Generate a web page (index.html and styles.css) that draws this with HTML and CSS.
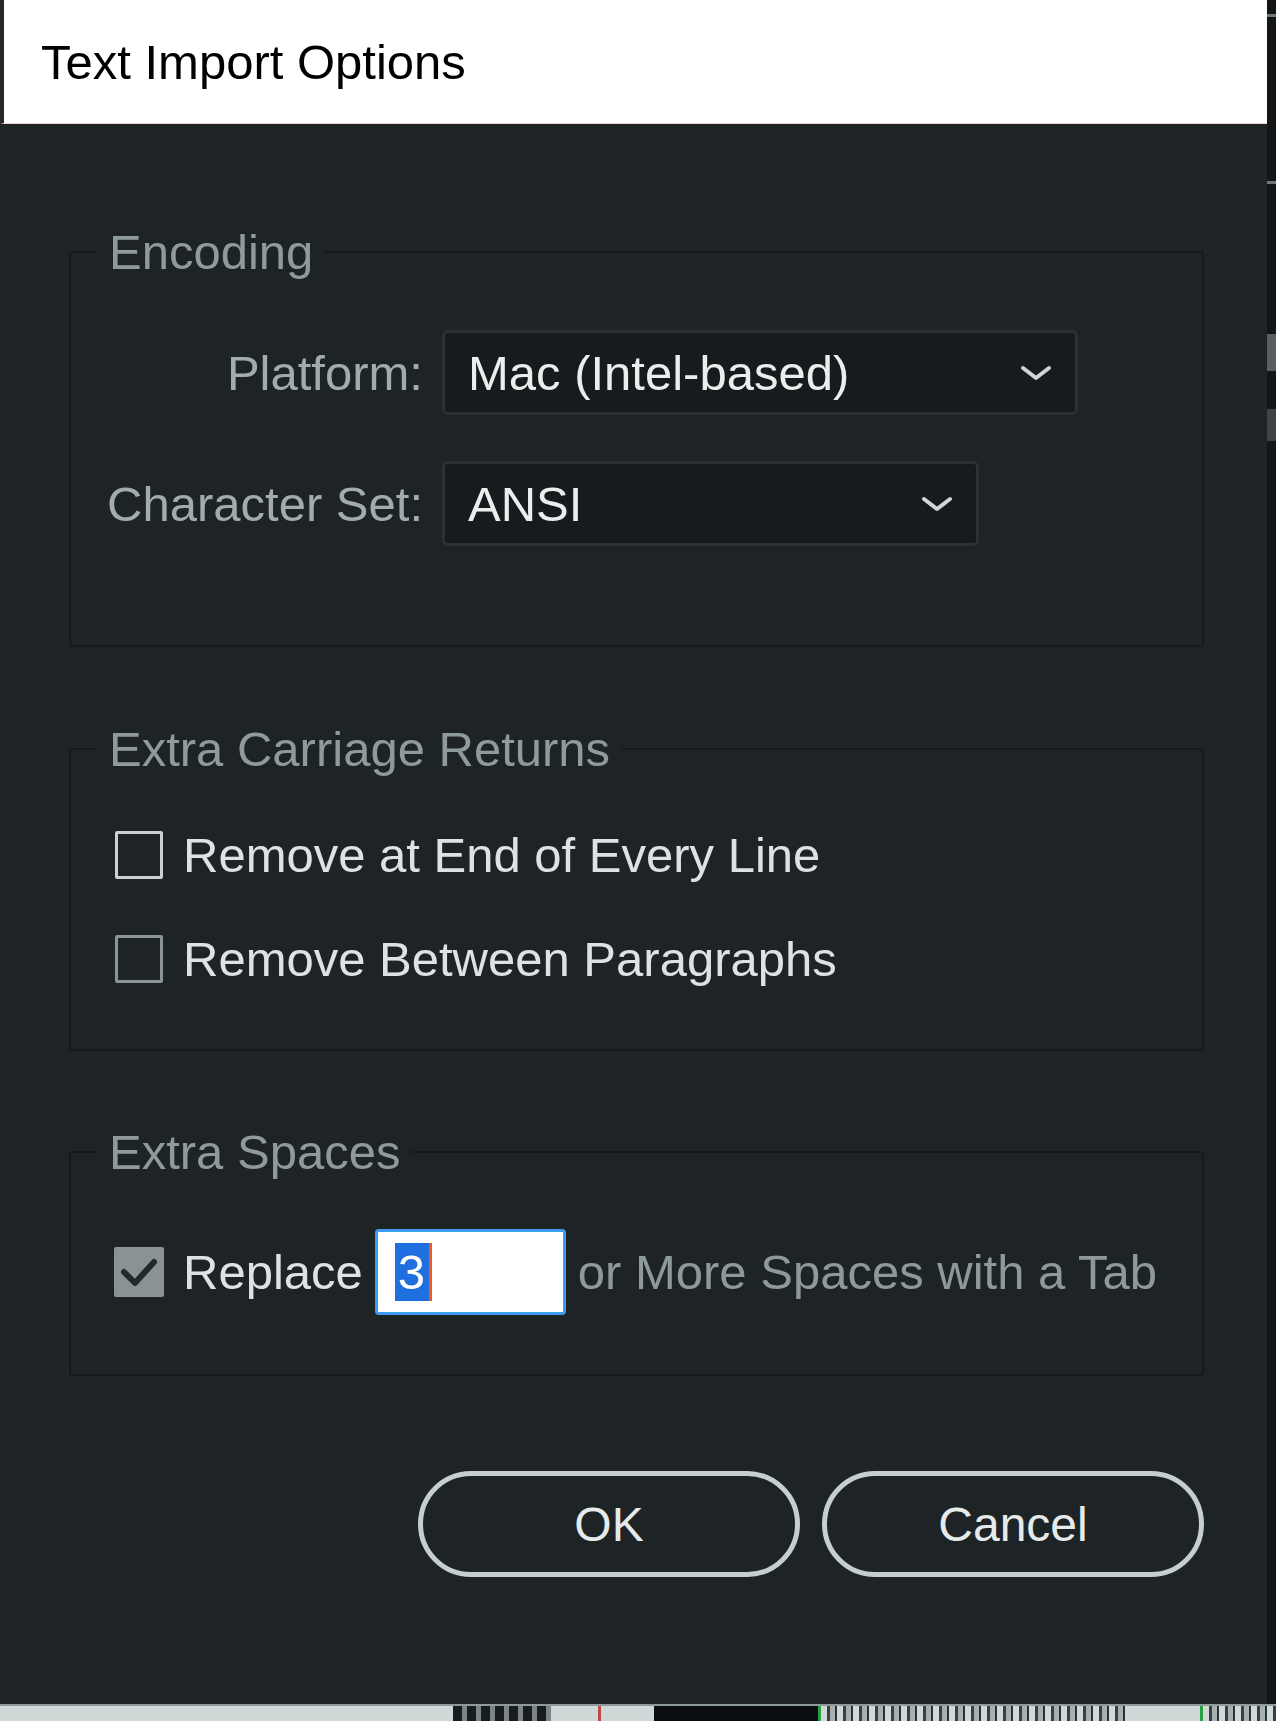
FILE: index.html
```html
<!DOCTYPE html>
<html lang="en">
<head>
<meta charset="utf-8">
<title>Text Import Options</title>
<link rel="stylesheet" href="styles.css">
</head>
<body>
<div class="screen">
  <div class="top">
    <div class="dialog">
      <div class="titlebar">Text Import Options</div>
      <div class="dlg-body">
        <fieldset class="group g-encoding">
          <legend>Encoding</legend>
          <div class="group-inner form-grid">
            <span class="field-label">Platform:</span>
            <div class="select w-platform">
              <span class="select-value">Mac (Intel-based)</span>
              <svg class="chev" viewBox="0 0 32 18" width="32" height="18"><path d="M3 4 L16 14 L29 4" fill="none" stroke="#cfd6d6" stroke-width="4" stroke-linecap="round" stroke-linejoin="round"/></svg>
            </div>
            <span class="field-label">Character Set:</span>
            <div class="select w-charset">
              <span class="select-value">ANSI</span>
              <svg class="chev" viewBox="0 0 32 18" width="32" height="18"><path d="M3 4 L16 14 L29 4" fill="none" stroke="#cfd6d6" stroke-width="4" stroke-linecap="round" stroke-linejoin="round"/></svg>
            </div>
          </div>
        </fieldset>

        <fieldset class="group g-returns">
          <legend>Extra Carriage Returns</legend>
          <div class="group-inner check-list">
            <div class="check-row">
              <span class="checkbox cb-focus"></span>
              <span class="check-label">Remove at End of Every Line</span>
            </div>
            <div class="check-row">
              <span class="checkbox"></span>
              <span class="check-label">Remove Between Paragraphs</span>
            </div>
          </div>
        </fieldset>

        <fieldset class="group g-spaces">
          <legend>Extra Spaces</legend>
          <div class="group-inner">
            <div class="replace-row">
              <span class="checkbox cb-checked">
                <svg viewBox="0 0 48 48" width="48" height="48"><path d="M9 24 L20 35 L39 14" fill="none" stroke="#23292b" stroke-width="6" stroke-linecap="round" stroke-linejoin="round"/></svg>
              </span>
              <span class="check-label">Replace</span>
              <div class="num-input"><span class="sel">3</span><span class="caret"></span></div>
              <span class="dim-label">or More Spaces with a Tab</span>
            </div>
          </div>
        </fieldset>

        <div class="buttons">
          <button class="btn">OK</button>
          <button class="btn">Cancel</button>
        </div>
      </div>
    </div>
    <div class="edge-right">
      <span class="mark m1"></span>
      <span class="mark m2"></span>
      <span class="mark m3"></span>
      <span class="mark m4"></span>
    </div>
  </div>
  <div class="edge-bottom">
    <span class="seg light s1"></span>
    <span class="seg bars s2"></span>
    <span class="seg light s3"></span>
    <span class="seg red s4"></span>
    <span class="seg light s5"></span>
    <span class="seg black s6"></span>
    <span class="seg green s7"></span>
    <span class="seg marks s8"></span>
    <span class="seg light s9"></span>
    <span class="seg green s10"></span>
    <span class="seg marks s11"></span>
  </div>
</div>
</body>
</html>
```

FILE: styles.css
```css
* { box-sizing: border-box; }

html, body {
  margin: 0;
  padding: 0;
  background: #1e2326;
}

body {
  font-family: "Liberation Sans", Arial, sans-serif;
  font-size: 49px;
  width: 1276px;
  height: 1721px;
  overflow: hidden;
}

.screen {
  display: flex;
  flex-direction: column;
  width: 1276px;
  height: 1721px;
}

.top {
  display: flex;
  height: 1704px;
}

.dialog {
  width: 1267px;
  height: 1704px;
  background: #1e2326;
  display: flex;
  flex-direction: column;
}

.titlebar {
  height: 124px;
  flex: none;
  background: #ffffff;
  color: #000000;
  border-left: 4px solid #24292b;
  border-bottom: 1px solid #f1d3d3;
  display: flex;
  align-items: center;
  padding-left: 37px;
  font-size: 49px;
  line-height: 56px;
}

.dlg-body {
  flex: 1;
  padding: 100px 63px 0 69px;
  display: flex;
  flex-direction: column;
}

/* group boxes */
.group {
  margin: 0;
  padding: 0;
  width: 1135px;
  min-width: 0;
  border: 2px solid #15191b;
  border-radius: 4px;
}

.group legend {
  margin-left: 26px;
  padding: 0 12px;
  font-size: 49px;
  line-height: 56px;
  color: #8f9a9c;
}

.g-returns { margin-top: 74px; }
.g-spaces { margin-top: 73px; }

/* encoding */
.form-grid {
  display: grid;
  grid-template-columns: 320px auto;
  column-gap: 19px;
  row-gap: 46px;
  align-items: center;
  justify-content: start;
  padding: 50px 0 99px 32px;
}

.field-label {
  text-align: right;
  color: #a2acaf;
  line-height: 56px;
  white-space: nowrap;
}

.select {
  height: 85px;
  background: #171b1d;
  border: 3px solid #2a3033;
  border-radius: 6px;
  display: flex;
  align-items: center;
  justify-content: space-between;
  padding: 0 23px 0 23px;
  color: #eceeee;
}

.w-platform { width: 636px; }
.w-charset { width: 537px; }

.select-value { line-height: 56px; }

.chev { display: block; flex: none; }

/* checkboxes */
.check-list {
  display: flex;
  flex-direction: column;
  gap: 48px;
  padding: 50px 0 62px 44px;
}

.check-row {
  display: flex;
  align-items: center;
  gap: 20px;
  height: 56px;
}

.checkbox {
  width: 48px;
  height: 48px;
  flex: none;
  border: 3px solid #8a9696;
  border-radius: 2px;
  display: flex;
  align-items: center;
  justify-content: center;
}

.cb-focus { border-color: #cbd0d0; }

.cb-checked {
  width: 50px;
  height: 50px;
  border: none;
  background: #8a9293;
}

.cb-checked svg { display: block; }

.check-label {
  color: #dde2e2;
  line-height: 56px;
  white-space: nowrap;
}

/* extra spaces */
.g-spaces .group-inner {
  padding: 49px 0 59px 43px;
}

.replace-row {
  display: flex;
  align-items: center;
  height: 86px;
}

.replace-row .check-label { margin-left: 19px; }

.num-input {
  width: 191px;
  height: 86px;
  margin-left: 12px;
  background: #ffffff;
  border: 3px solid #3d9cf0;
  border-radius: 4px;
  display: flex;
  align-items: center;
  padding-left: 17px;
}

.sel {
  display: inline-block;
  height: 58px;
  line-height: 58px;
  padding: 0 4px 0 3px;
  background: #1f6fe0;
  color: #ffffff;
}

.caret {
  display: inline-block;
  width: 3px;
  height: 58px;
  background: #f05a22;
}

.dim-label {
  margin-left: 12px;
  color: #8e999b;
  line-height: 56px;
  white-space: nowrap;
}

/* buttons */
.buttons {
  margin-top: 95px;
  display: flex;
  justify-content: flex-end;
  gap: 22px;
}

.btn {
  width: 382px;
  height: 106px;
  border: 5px solid #c5cfce;
  border-radius: 53px;
  background: transparent;
  color: #e6eaea;
  font-family: "Liberation Sans", Arial, sans-serif;
  font-size: 48px;
  padding: 0;
}

/* right edge of screenshot */
.edge-right {
  width: 9px;
  height: 1704px;
  background: #121618;
  display: flex;
  flex-direction: column;
}

.mark {
  display: block;
  width: 9px;
  background: #6f7778;
}
.m1 { height: 3px; margin-top: 14px; }
.m2 { height: 3px; margin-top: 164px; }
.m3 { height: 37px; margin-top: 150px; background: #585f61; }
.m4 { height: 32px; margin-top: 38px; background: #3e4446; }

/* bottom edge of screenshot */
.edge-bottom {
  height: 17px;
  display: flex;
  background: #ccd6d5;
  border-top: 2px solid #8f9a9a;
}

.seg { display: block; height: 100%; }
.light { background: #cfd9d8; }
.bars { background: repeating-linear-gradient(90deg, #1a1d1f 0 9px, #7d8686 9px 14px); }
.red { background: #c64545; }
.black { background: #0b0e10; }
.green { background: #2aa045; }
.marks { background: repeating-linear-gradient(90deg, #cfd9d8 0 6px, #3a4142 6px 9px, #a6b0b0 9px 14px, #2c3233 14px 16px); }

.s1 { width: 453px; }
.s2 { width: 98px; }
.s3 { width: 47px; }
.s4 { width: 3px; }
.s5 { width: 53px; }
.s6 { width: 164px; }
.s7 { width: 3px; }
.s8 { width: 309px; }
.s9 { width: 70px; }
.s10 { width: 3px; }
.s11 { width: 73px; }
```
